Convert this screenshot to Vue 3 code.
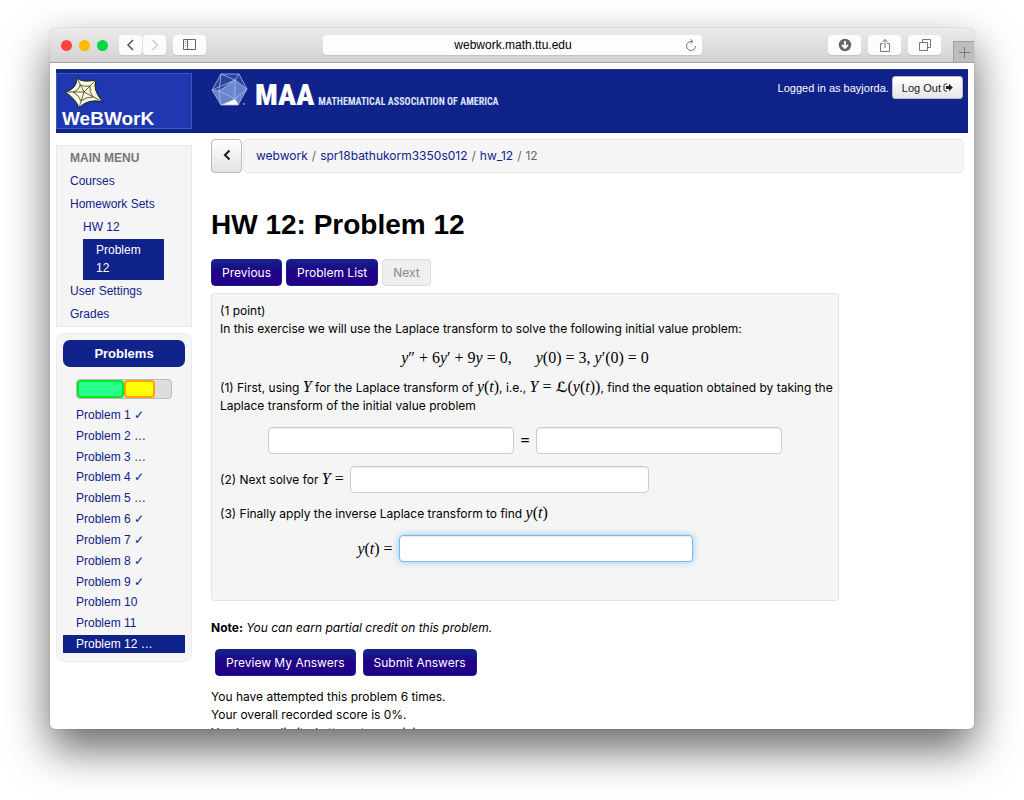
<script setup>
import { ref, computed } from 'vue'

const course = 'spr18bathukorm3350s012'

// done: all correct, started: attempted but not complete
const problems = ref([
  { id: 1, status: 'done' },
  { id: 2, status: 'started' },
  { id: 3, status: 'started' },
  { id: 4, status: 'done' },
  { id: 5, status: 'started' },
  { id: 6, status: 'done' },
  { id: 7, status: 'done' },
  { id: 8, status: 'done' },
  { id: 9, status: 'done' },
  { id: 10, status: '' },
  { id: 11, status: '' },
  { id: 12, status: 'started' }
])
const current = ref(12)
const answers = ref({ left: '', right: '', solved: '', final: '' })

const marks = { done: ' ✓', started: ' …' }

const share = (status) => {
  const n = problems.value.filter(p => p.status === status).length
  return Math.round(n / problems.value.length * 100) + '%'
}
const doneWidth = computed(() => share('done'))
const startedWidth = computed(() => share('started'))
</script>

<template>
  <div class="desktop">
    <div class="window">
      <!-- browser toolbar -->
      <div class="toolbar">
        <div class="lights">
          <span class="light red"></span>
          <span class="light yellow"></span>
          <span class="light green"></span>
        </div>
        <div class="nav">
          <button class="tool small" aria-label="Back">
            <svg width="10" height="14" viewBox="0 0 10 14"><path d="M7 2L2 7l5 5" fill="none" stroke="#555" stroke-width="1.500" /></svg>
          </button>
          <button class="tool small" aria-label="Forward">
            <svg width="10" height="14" viewBox="0 0 10 14"><path d="M2.500 2l5 5-5 5" fill="none" stroke="#ccc" stroke-width="1.500" /></svg>
          </button>
        </div>
        <button class="tool" aria-label="Sidebar">
          <svg width="13" height="12" viewBox="0 0 13 12" fill="none" stroke="#666"><path d="M.5.5h12v10H.5zM4.500.5v10" /><path d="M2 2.500h1M2 4.500h1M2 6.500h1" stroke="#888" /></svg>
        </button>
        <div class="address">
          <span>webwork.math.ttu.edu</span>
          <button class="reload" aria-label="Reload">
            <svg width="12" height="13" viewBox="0 0 12 13"><path d="M10.500 7A4.500 4.500 0 1 1 6 2.500h1.500" fill="none" stroke="#777" /><path d="M5.500.5l2.500 2-2.500 2" fill="none" stroke="#777" /></svg>
          </button>
        </div>
        <div class="tools">
          <button class="tool" aria-label="Downloads">
            <svg width="14" height="14" viewBox="0 0 14 14"><circle cx="7" cy="7" r="6.200" fill="#666" /><path d="M7 3v7M4 7l3 3 3-3" fill="none" stroke="#fff" stroke-width="1.800" /></svg>
          </button>
          <button class="tool" aria-label="Share">
            <svg width="12" height="15" viewBox="0 0 12 15" fill="none" stroke="#777"><path d="M4 5.500H1.500v8h9v-8H8M6 10V1.500M3.500 4L6 1.500 8.500 4" /></svg>
          </button>
          <button class="tool" aria-label="Tabs">
            <svg width="12" height="12" viewBox="0 0 12 12" fill="none" stroke="#777"><path d="M.5 3.500h8v8h-8zM3.500 3.500v-3h8v8h-3" /></svg>
          </button>
        </div>
        <button class="newtab" aria-label="New tab">
          <svg width="11" height="11" viewBox="0 0 11 11"><path d="M5.500 0v11M0 5.500h11" stroke="#777" /></svg>
        </button>
      </div>

      <div class="page">
        <header class="masthead">
          <a class="webwork" href="#">
            <svg width="40" height="32" viewBox="0 0 40 32">
              <path d="M13 1Q18 6 32 3Q28 13 39 25Q24 21 15 31Q12 22 1 15Q13 12 13 1Z" fill="#fbf8d5" stroke="#222" />
              <g fill="none" stroke="#333" stroke-width=".8">
                <path d="M20 15L13 1M20 15L32 3M20 15L39 25M20 15L15 31M20 15L1 15" />
                <path d="M16 8Q20 10 26 9Q25 15 29 20Q21 20 17 24Q15 18 9 15Q15 13 16 8Z" />
              </g>
            </svg>
            <span>WeBWorK</span>
          </a>
          <a class="maa" href="#">
            <svg width="37" height="34" viewBox="0 0 37 34">
              <path d="M10 1h18l8 15-9 16H10L1 17z" fill="#2a43a0" />
              <path d="M24 7L8 18l-7-1 9 15L24 26l3 6 9-16z" fill="#6781cb" />
              <path d="M8 18L24 7v19z" fill="#6c86d0" />
              <path d="M24 26L10 32h18z" fill="#fff" />
              <path d="M10 1h18l8 15-9 16H10L1 17zM10 1l14 6 4-6M24 7l12 9-12 10zL8 18l16 8M10 1L8 18l2 14M1 17l7 1M24 26l-14 6M24 26l4 6M1 17L24 7" fill="none" stroke="#a9b9e7" stroke-width=".8" />
              <circle cx="33" cy="31" r="1" fill="#7b92d4" />
            </svg>
            <strong>MAA</strong>
            <span>MATHEMATICAL ASSOCIATION OF AMERICA</span>
          </a>
          <div class="login">
            <span>Logged in as bayjorda.</span>
            <button class="logout">
              Log Out
              <svg width="10" height="9" viewBox="0 0 10 9"><path d="M4 1H2.500Q1 1 1 2.500v4Q1 8 2.500 8H4" fill="none" stroke="#222" /><path d="M3 3h3V.8L9.800 4.500 6 8.200V6H3z" fill="#222" /></svg>
            </button>
          </div>
        </header>

        <div class="columns">
          <aside class="side">
            <nav class="menu">
              <h2>MAIN MENU</h2>
              <a href="#">Courses</a>
              <a href="#">Homework Sets</a>
              <a href="#" class="sub">HW 12</a>
              <a href="#" class="here">Problem<br>12</a>
              <a href="#">User Settings</a>
              <a href="#">Grades</a>
            </nav>

            <nav class="problems">
              <h2>Problems</h2>
              <div class="progress">
                <div class="bar done" :style="{ width: doneWidth }"></div>
                <div class="bar started" :style="{ width: startedWidth }"></div>
              </div>
              <ul>
                <li v-for="p in problems" :key="p.id">
                  <a href="#" :class="{ active: p.id === current }" @click.prevent="current = p.id">Problem {{ p.id }}{{ marks[p.status] }}</a>
                </li>
              </ul>
            </nav>
          </aside>

          <main class="main">
            <div class="crumbs">
              <button class="back" aria-label="Up">
                <svg width="8" height="12" viewBox="0 0 8 12"><path d="M6.500 1.500L2 6l4.500 4.500" fill="none" stroke="#222" stroke-width="2.200" /></svg>
              </button>
              <div class="trail">
                <a href="#">webwork</a><i>/</i><a href="#">{{ course }}</a><i>/</i><a href="#">hw_12</a><i>/</i><span>{{ current }}</span>
              </div>
            </div>

            <h1>HW 12: Problem 12</h1>

            <div class="buttons">
              <button class="btn">Previous</button>
              <button class="btn">Problem List</button>
              <button class="btn off" disabled>Next</button>
            </div>

            <section class="problem">
              <p>(1 point)<br>In this exercise we will use the Laplace transform to solve the following initial value problem:</p>
              <div class="equation math">
                <span><em>y</em>″ + 6<em>y</em>′ + 9<em>y</em> = 0,</span>
                <span><em>y</em>(0) = 3, <em>y</em>′(0) = 0</span>
              </div>
              <p>(1) First, using <span class="math"><em>Y</em></span> for the Laplace transform of <span class="math"><em>y</em>(<em>t</em>)</span>, i.e., <span class="math"><em>Y</em> = <b class="script">ℒ</b>(<em>y</em>(<em>t</em>))</span>, find the equation obtained by taking the<br>Laplace transform of the initial value problem</p>
              <div class="row center">
                <input v-model="answers.left" class="half" type="text" aria-label="Left side of the equation">
                <span class="eq math">=</span>
                <input v-model="answers.right" class="half" type="text" aria-label="Right side of the equation">
              </div>
              <div class="row">
                <label for="solved">(2) Next solve for <span class="math"><em>Y</em> =</span></label>
                <input id="solved" v-model="answers.solved" class="solved" type="text">
              </div>
              <p class="last">(3) Finally apply the inverse Laplace transform to find <span class="math"><em>y</em>(<em>t</em>)</span></p>
              <div class="row center">
                <label for="final" class="math"><em>y</em>(<em>t</em>) =</label>
                <input id="final" v-model="answers.final" class="final" type="text">
              </div>
            </section>

            <p class="note"><b>Note:</b> <em>You can earn partial credit on this problem.</em></p>
            <div class="buttons submit">
              <button class="btn">Preview My Answers</button>
              <button class="btn">Submit Answers</button>
            </div>
            <p>You have attempted this problem 6 times.<br>Your overall recorded score is 0%.<br>You have unlimited attempts remaining.</p>
          </main>
        </div>
      </div>
    </div>
  </div>
</template>

<style>
body {
  margin: 0;
  background: #fff;
}
</style>

<style scoped>
* {
  box-sizing: border-box;
}
.desktop {
  height: 100vh;
  padding: 28px 50px 71px;
  overflow: hidden;
  display: flex;
  font: 12px/18px "Liberation Sans", Arial, sans-serif;
  color: #000;
}
.window {
  flex: 1;
  min-width: 0;
  display: flex;
  flex-direction: column;
  background: #fff;
  border-radius: 5px;
  overflow: hidden;
  box-shadow: 0 0 1px rgba(0, 0, 0, 0.5), 0 20px 44px rgba(0, 0, 0, 0.6);
}
button {
  font-family: inherit;
  cursor: pointer;
}
a {
  color: #0f238a;
  text-decoration: none;
}
p, h1, h2, ul {
  margin: 0;
  padding: 0;
}

/* toolbar */
.toolbar {
  flex: none;
  height: 35px;
  display: flex;
  align-items: center;
  padding-left: 11px;
  background: linear-gradient(#ebebeb, #d3d3d3);
  border-bottom: 1px solid #a3a3a3;
}
.lights {
  display: flex;
  gap: 7px;
  margin-right: 11px;
}
.light {
  width: 11px;
  height: 11px;
  border-radius: 50%;
}
.red { background: #ff4442; }
.yellow { background: #ffb900; }
.green { background: #00d742; }
.nav {
  display: flex;
  gap: 1px;
  margin-right: 7px;
}
.tool {
  width: 33px;
  height: 20px;
  padding: 0;
  display: flex;
  align-items: center;
  justify-content: center;
  border: 0;
  border-radius: 4px;
  background: #fcfcfc;
  box-shadow: 0 1px 0 #c4c4c4;
}
.tool.small {
  width: 23px;
}
.address {
  flex: 1;
  margin: 0 126px 0 117px;
  height: 20px;
  display: flex;
  align-items: center;
  padding: 0 5px 0 18px;
  background: #fdfdfd;
  border-radius: 4px;
  box-shadow: 0 1px 0 #c4c4c4;
}
.address span {
  flex: 1;
  text-align: center;
}
.reload {
  display: flex;
  padding: 0;
  border: 0;
  background: none;
}
.tools {
  display: flex;
  gap: 7px;
  margin-right: 12px;
}
.newtab {
  align-self: flex-end;
  width: 21px;
  height: 21px;
  display: flex;
  align-items: center;
  justify-content: center;
  padding: 0;
  border: 1px solid #a0a0a0;
  border-width: 1px 0 0 1px;
  background: #bdbdbd;
}

/* page header */
.page {
  flex: 1;
  min-height: 0;
  overflow: hidden;
  padding: 6px;
}
.masthead {
  display: flex;
  align-items: flex-start;
  height: 64px;
  padding: 3px 5px 4px 0;
  background: #0f238a;
  border-top: 1px solid #1d3d8d;
}
.webwork {
  width: 136px;
  height: 56px;
  display: flex;
  flex-direction: column;
  padding: 3px 5px 0;
  border: 1px solid #3b5bb5;
  background: #1f37b1;
  color: #fff;
  font-weight: bold;
  font-size: 19px;
  line-height: 20px;
}
.webwork svg {
  flex: none;
  margin-left: 2px;
}
.maa {
  flex: 1;
  display: flex;
  align-items: flex-end;
  margin-left: 19px;
  color: #fff;
  font-family: "Liberation Sans Narrow", "Roboto Condensed", "Liberation Sans", sans-serif;
  font-weight: bold;
}
.maa strong {
  margin: 0 4px 0 7px;
  font-size: 30px;
  line-height: 24px;
}
.maa span {
  font-size: 10px;
  line-height: 10px;
  color: #dce3f8;
}
.login {
  display: flex;
  align-items: center;
  gap: 3px;
  padding-top: 3px;
  color: #fff;
  font-size: 11px;
}
.logout {
  height: 23px;
  padding: 0 9px;
  display: flex;
  align-items: center;
  gap: 2px;
  border: 1px solid #bbb;
  border-radius: 3px;
  background: linear-gradient(#fff, #e6e6e6);
  color: #222;
  font-size: 11px;
}

/* sidebar */
.columns {
  display: flex;
  gap: 19px;
  padding-right: 4px;
}
.side {
  flex: none;
  width: 136px;
  padding-top: 12px;
}
.menu {
  display: flex;
  flex-direction: column;
  padding: 1px 14px 0 13px;
  border: 1px solid #e9e9e9;
  background: #f5f5f5;
}
.menu h2 {
  color: #777;
  font-size: 12px;
  line-height: 18px;
  padding: 2px 0 3px;
}
.menu a {
  padding: 2px 0 3px;
}
.menu .sub {
  padding-left: 13px;
}
.menu .here {
  margin: 0 13px 0 13px;
  padding-left: 13px;
  background: #0f238a;
  color: #fff;
}
.problems {
  margin-top: 6px;
  padding: 6px 6px 8px;
  border: 1px solid #ececec;
  border-radius: 8px;
  background: #f5f5f5;
}
.problems h2 {
  border-radius: 7px;
  background: #0f238a;
  color: #fff;
  font-size: 13px;
  line-height: 27px;
  text-align: center;
}
.progress {
  display: flex;
  height: 20px;
  margin: 12px 13px 7px;
  border: 1px solid #bbb;
  border-radius: 4px;
  background: #ddd;
}
.bar {
  border: 2px solid;
  border-radius: 4px;
}
.bar.done {
  background: #2aff8c;
  border-color: #00e827;
}
.bar.started {
  background: #ff0;
  border-color: #ffa500;
}
.problems ul {
  height: 247px;
  display: flex;
  flex-direction: column;
  justify-content: space-between;
  list-style: none;
}
.problems li a {
  display: block;
  padding-left: 13px;
}
.problems li a.active {
  background: #0f238a;
  color: #fff;
}

/* main column */
.main {
  flex: 1;
  min-width: 0;
  padding-top: 6px;
  font-family: Inter, "Liberation Sans", Arial, sans-serif;
}
.crumbs {
  display: flex;
  height: 34px;
  gap: 1px;
}
.back {
  width: 31px;
  padding: 0;
  border: 1px solid #bbb;
  border-radius: 4px;
  background: linear-gradient(#fff, #e3e3e3);
}
.trail {
  flex: 1;
  display: flex;
  align-items: center;
  padding-left: 12px;
  border: 1px solid #e8e8e8;
  border-radius: 4px;
  background: #f5f5f5;
  color: #666;
}
.trail i {
  padding: 0 4px;
  font-style: normal;
}
h1 {
  margin: 34px 0 16px;
  font: bold 28px/36px "Liberation Sans", Arial, sans-serif;
}
.buttons {
  display: flex;
  gap: 4px;
}
.btn {
  height: 27px;
  padding: 0 10px;
  border: 1px solid #1c1f86;
  border-radius: 4px;
  background: linear-gradient(#12258a, #220087 50%);
  color: #fff;
  font-size: 12px;
}
.btn.off {
  border-color: #ddd;
  background: #efefef;
  color: #888;
}
.problem {
  width: 83.4%;
  margin-top: 7px;
  padding: 8px 0 38px 8px;
  border: 1px solid #e3e3e3;
  border-radius: 3px;
  background: #f5f5f5;
}
.problem p {
  white-space: nowrap;
}
.math {
  font-family: "Liberation Serif", "Times New Roman", serif;
  font-size: 16px;
  line-height: 16px;
}
.script {
  font-family: "DejaVu Sans", sans-serif;
  font-size: 14px;
}
.equation {
  display: flex;
  justify-content: center;
  gap: 24px;
  padding: 9px 8px 10px 0;
  line-height: 22px;
}
.row {
  display: flex;
  align-items: center;
  gap: 6px;
  margin-top: 12px;
}
.center {
  justify-content: center;
  padding-right: 8px;
}
.eq {
  font-weight: bold;
}
.problem .last {
  margin-top: 12px;
}
.row input {
  height: 27px;
  padding: 0 6px;
  border: 1px solid #ccc;
  border-radius: 4px;
  background: #fff;
  box-shadow: inset 0 1px 1px rgba(0, 0, 0, 0.08);
  font: inherit;
  outline: none;
}
.row .half { width: 246px; }
.row .solved { width: 299px; }
.row .final {
  width: 294px;
  border-color: #6fbcf0;
  box-shadow: inset 0 1px 1px rgba(0, 0, 0, 0.08), 0 0 7px rgba(82, 168, 236, 0.6);
}
.note {
  margin-top: 18px;
}
.submit {
  gap: 7px;
  margin: 12px 4px;
}
</style>
